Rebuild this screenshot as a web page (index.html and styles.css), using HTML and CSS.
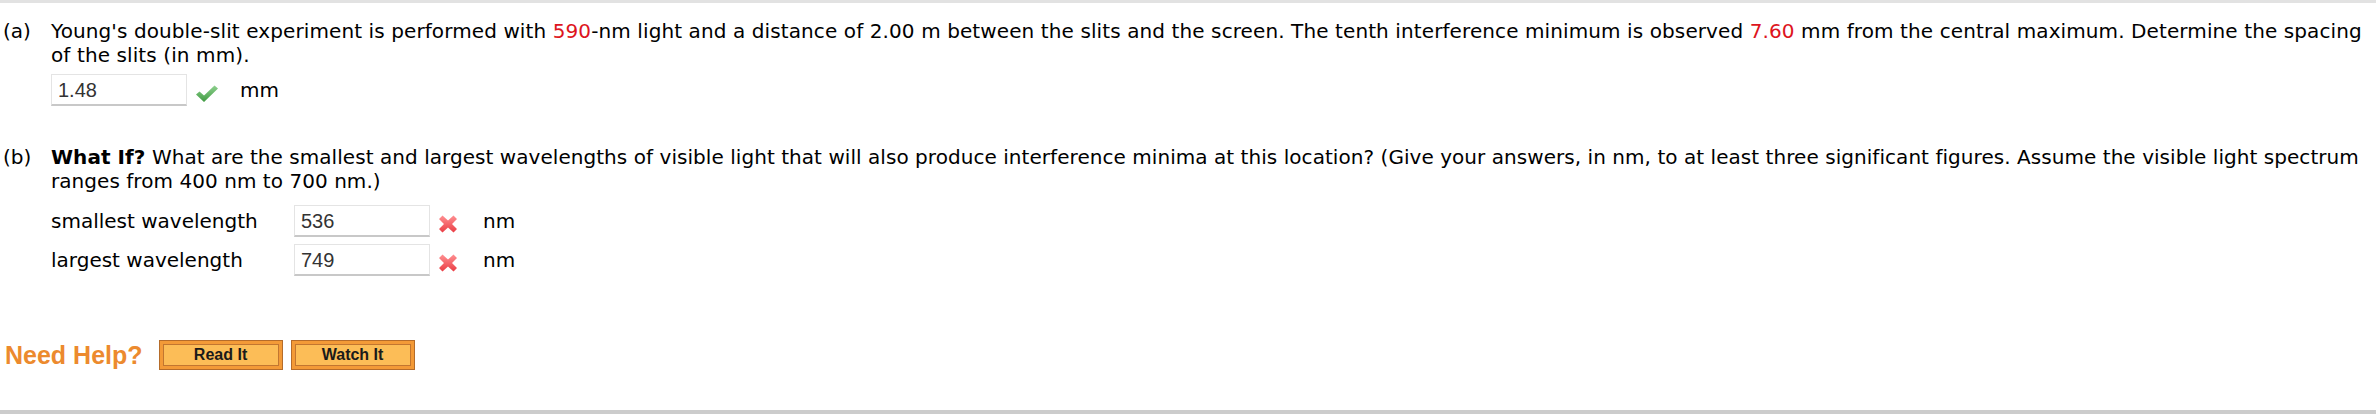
FILE: index.html
```html
<!DOCTYPE html>
<html lang="en">
<head>
<meta charset="utf-8">
<title>Question</title>
<link rel="stylesheet" href="styles.css">
</head>
<body>
<div class="question">
  <div class="part part-a">
    <span class="part-label">(a)</span>
    <div class="part-body">
      <p class="prompt">Young's double-slit experiment is performed with <span class="given">590</span>-nm light and a distance of 2.00 m between the slits and the screen. The tenth interference minimum is observed <span class="given">7.60</span> mm from the central maximum. Determine the spacing of the slits (in mm).</p>
      <div class="answer-row">
        <span class="answer-box">1.48</span>
        <span class="mark">
          <svg viewBox="0 0 24 19" width="24" height="19" aria-hidden="true">
            <defs>
              <linearGradient id="gc" x1="0" y1="0" x2="0" y2="1">
                <stop offset="0" stop-color="#8fd18f"/>
                <stop offset="1" stop-color="#3f9a41"/>
              </linearGradient>
            </defs>
            <path d="M1 10.5 L4.5 7.5 L9 11.5 L19.5 1.5 L23 4.5 L9 18 Z" fill="url(#gc)"/>
          </svg>
        </span>
        <span class="unit">mm</span>
      </div>
    </div>
  </div>

  <div class="part part-b">
    <span class="part-label">(b)</span>
    <div class="part-body">
      <p class="prompt"><b>What If?</b> What are the smallest and largest wavelengths of visible light that will also produce interference minima at this location? (Give your answers, in nm, to at least three significant figures. Assume the visible light spectrum ranges from 400 nm to 700 nm.)</p>
      <div class="answer-grid">
        <span class="field-label">smallest wavelength</span>
        <span class="answer-box">536</span>
        <span class="mark">
          <svg viewBox="0 0 20 18" width="20" height="18" aria-hidden="true">
            <defs>
              <linearGradient id="gx1" x1="0" y1="0" x2="0" y2="1">
                <stop offset="0" stop-color="#ff9092"/>
                <stop offset="1" stop-color="#ea3d44"/>
              </linearGradient>
            </defs>
            <path d="M1 4 L4.5 0.5 L10 5.5 L15.5 0.5 L19 4 L14 9 L19 14 L15.5 17.5 L10 12.5 L4.5 17.5 L1 14 L6 9 Z" fill="url(#gx1)"/>
          </svg>
        </span>
        <span class="unit">nm</span>

        <span class="field-label">largest wavelength</span>
        <span class="answer-box">749</span>
        <span class="mark">
          <svg viewBox="0 0 20 18" width="20" height="18" aria-hidden="true">
            <defs>
              <linearGradient id="gx2" x1="0" y1="0" x2="0" y2="1">
                <stop offset="0" stop-color="#ff9092"/>
                <stop offset="1" stop-color="#ea3d44"/>
              </linearGradient>
            </defs>
            <path d="M1 4 L4.5 0.5 L10 5.5 L15.5 0.5 L19 4 L14 9 L19 14 L15.5 17.5 L10 12.5 L4.5 17.5 L1 14 L6 9 Z" fill="url(#gx2)"/>
          </svg>
        </span>
        <span class="unit">nm</span>
      </div>
    </div>
  </div>

  <div class="help">
    <span class="help-title">Need Help?</span>
    <span class="help-btn"><span class="help-btn-inner">Read It</span></span>
    <span class="help-btn"><span class="help-btn-inner">Watch It</span></span>
  </div>
</div>
</body>
</html>
```

FILE: styles.css
```css
html, body {
  margin: 0;
  padding: 0;
  background: #ffffff;
}

.question {
  width: 2376px;
  height: 414px;
  box-sizing: border-box;
  border-top: 3px solid #e2e2e2;
  border-bottom: 4px solid #cccccc;
  padding: 16px 0 0 3px;
  font-family: "DejaVu Sans", sans-serif;
  font-size: 20px;
  line-height: 24px;
  color: #000000;
}

.part {
  display: flex;
}

.part-a {
  padding-right: 6px;
}

.part-a .prompt {
  letter-spacing: 0.1px;
}

.part-b {
  margin-top: 39px;
  padding-right: 4px;
}

.part-b .prompt {
  letter-spacing: 0.05px;
}

.part-label {
  flex: 0 0 48px;
}

.part-body {
  flex: 1 1 auto;
}

.prompt {
  margin: 0;
}

.given {
  color: #dd1420;
}

.answer-row {
  display: flex;
  align-items: center;
  margin-top: 7px;
}

.answer-box {
  display: flex;
  align-items: center;
  box-sizing: border-box;
  width: 136px;
  height: 32px;
  padding-left: 6px;
  border: 1px solid #e4e4e4;
  border-bottom: 2px solid #c8c8c8;
  font-family: "Liberation Sans", Arial, sans-serif;
  font-size: 20px;
  color: #333333;
}

.mark {
  display: flex;
  width: 24px;
  margin-left: 8px;
  padding-top: 6px;
}

.unit {
  margin-left: 21px;
}

.answer-grid {
  display: grid;
  grid-template-columns: 243px 136px auto auto;
  justify-content: start;
  align-items: center;
  row-gap: 7px;
  margin-top: 12px;
}

.help {
  display: flex;
  align-items: center;
  margin-top: 64px;
  padding-left: 2px;
}

.help-title {
  font-family: "Liberation Sans", Arial, sans-serif;
  font-weight: bold;
  font-size: 25px;
  color: #ec8a2e;
  margin-right: 16px;
}

.help-btn {
  display: flex;
  box-sizing: border-box;
  width: 124px;
  height: 30px;
  padding: 3px 3px;
  margin-right: 8px;
  border: 1px solid #b56c2a;
  background: #f39a37;
}

.help-btn-inner {
  flex: 1;
  display: flex;
  align-items: center;
  justify-content: center;
  border: 1px solid #c27630;
  background: #fcbd57;
  font-family: "Liberation Sans", Arial, sans-serif;
  font-weight: bold;
  font-size: 16px;
  color: #1a1a1a;
}
```
